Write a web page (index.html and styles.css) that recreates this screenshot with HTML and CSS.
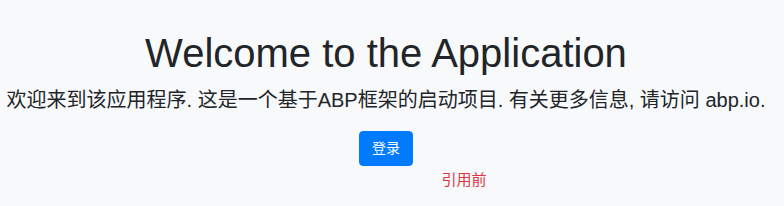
FILE: index.html
```html
<!DOCTYPE html>
<html lang="zh">
<head>
<meta charset="utf-8">
<link rel="stylesheet" href="styles.css">
</head>
<body>
<main class="page">
  <h1 class="title">Welcome to the Application</h1>
  <p class="lead">欢迎来到该应用程序. 这是一个基于ABP框架的启动项目. 有关更多信息, 请访问 abp.io.</p>
  <div class="actions"><a class="btn" href="#">登录</a></div>
  <div class="note">引用前</div>
</main>
</body>
</html>
```
FILE: styles.css
```css
html, body {
  margin: 0;
  padding: 0;
  background: #f8f9fa;
}
body {
  font-family: "Liberation Sans", Arial, "Noto Sans CJK SC", sans-serif;
  color: #212529;
}
.page {
  width: 772px;
  padding-top: 29px;
  text-align: center;
}
.title {
  margin: 0 0 8px;
  font-size: 40px;
  font-weight: 400;
  line-height: 1.2;
}
.lead {
  margin: 0 0 16px;
  font-size: 20px;
  line-height: 1.5;
  white-space: nowrap;
}
.actions {
  line-height: 1;
}
.btn {
  display: inline-block;
  padding: 6px 12px;
  font-size: 14px;
  line-height: 21px;
  color: #fff;
  background: #007bff;
  border: 1px solid #007bff;
  border-radius: 4px;
  text-decoration: none;
}
.note {
  margin-top: 2px;
  padding-left: 156px;
  font-size: 15px;
  line-height: 24px;
  color: #dc3545;
}
```
